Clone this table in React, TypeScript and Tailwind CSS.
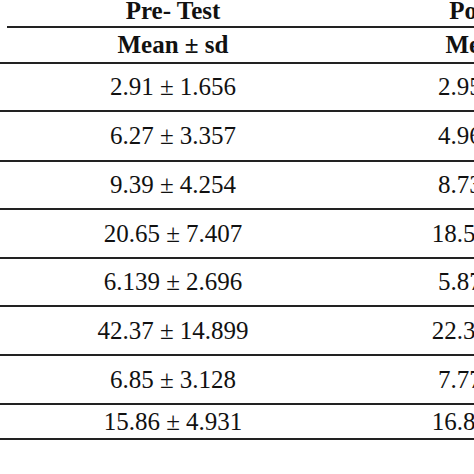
import React from "react";

// visible part of a results table: pre / post columns, rows cut at the right edge
const ROWS = [
  { pre: "2.91 ± 1.656", post: "2.95 ± 1.538", h: "h-[48px]" },
  { pre: "6.27 ± 3.357", post: "4.96 ± 2.844", h: "h-[50px]" },
  { pre: "9.39 ± 4.254", post: "8.73 ± 4.102", h: "h-[48px]" },
  { pre: "20.65 ± 7.407", post: "18.51 ± 6.935", h: "h-[49px]" },
  { pre: "6.139 ± 2.696", post: "5.87 ± 2.415", h: "h-[48px]" },
  { pre: "42.37 ± 14.899", post: "22.36 ± 9.771", h: "h-[49px]" },
  { pre: "6.85 ± 3.128", post: "7.77 ± 3.306", h: "h-[49px]" },
  { pre: "15.86 ± 4.931", post: "16.84 ± 5.210", h: "h-[35px]" },
];

const App: React.FC = () => {
  return (
    <div
      className="w-[474px] h-[474px] overflow-hidden bg-white text-[#111111] text-[25px]"
      style={{ fontFamily: '"Liberation Serif", "Times New Roman", serif' }}
    >
      <div className="w-[660px]">
        {/* group header */}
        <div className="flex flex-col">
          <div className="flex h-[26px] font-bold leading-[22px]">
            <div className="w-[346px] text-center">Pre- Test</div>
            <div className="w-[310px] text-center">Post- Test</div>
          </div>
          <div className="ml-[7px] h-[2px] bg-[#222222]" />
        </div>

        {/* sub header */}
        <div className="flex h-[36px] items-center border-b-2 border-[#222222] font-bold">
          <div className="w-[346px] text-center">Mean ± sd</div>
          <div className="w-[310px] text-center">Mean ± sd</div>
        </div>

        {ROWS.map((r, i) => (
          <div key={i} className={`flex items-center border-b-2 border-[#222222] ${r.h}`}>
            <div className="w-[346px] text-center">{r.pre}</div>
            <div className="w-[310px] text-center">{r.post}</div>
          </div>
        ))}
      </div>
    </div>
  );
};

export default App;
